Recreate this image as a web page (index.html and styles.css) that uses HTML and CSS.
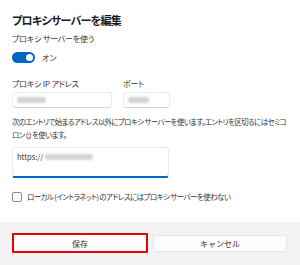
FILE: index.html
```html
<!DOCTYPE html>
<html lang="ja">
<head>
    <meta charset="UTF-8">
    <meta name="viewport" content="width=device-width, initial-scale=1.0">
    <title>プロキシサーバーを編集</title>
    <link rel="stylesheet" href="styles.css">
</head>
<body>
    <div class="dialog">
        <div class="content">
            <h1>プロキシサーバーを編集</h1>
            <div class="label">プロキシ サーバーを使う</div>
            <div class="toggle-row">
                <span class="toggle"><span class="knob"></span></span>
                <span class="toggle-text">オン</span>
            </div>

            <div class="fields">
                <div class="field ip">
                    <div class="label">プロキシ IP アドレス</div>
                    <div class="input"><span class="blur" style="width: 29px"></span></div>
                </div>
                <div class="field port">
                    <div class="label">ポート</div>
                    <div class="input"><span class="blur" style="width: 21px"></span></div>
                </div>
            </div>

            <p class="desc">次のエントリで始まるアドレス以外にプロキシ サーバーを使います。エントリを区切るにはセミコロン (;) を使います。</p>
            <div class="textarea"><span class="value">https://</span><span class="blur" style="width: 48px"></span></div>

            <label class="check-row">
                <span class="checkbox"></span>
                <span>ローカル (イントラネット) のアドレスにはプロキシ サーバーを使わない</span>
            </label>
        </div>

        <div class="footer">
            <div class="save-mark"><button class="btn">保存</button></div>
            <button class="btn cancel">キャンセル</button>
        </div>
    </div>
</body>
</html>
```

FILE: styles.css
```css
* { box-sizing: border-box; }
body { margin: 0; font-family: "Noto Sans CJK JP", "Noto Sans", sans-serif; font-feature-settings: "palt"; color: #333; background: #fff; }
.dialog { width: 300px; height: 265px; display: flex; flex-direction: column; overflow: hidden; }
.content { padding: 12px 12px 0 12px; }
h1 { margin: 0; font-size: 11px; line-height: 16px; font-weight: 700; letter-spacing: -0.7px; color: #1b1b1b; }
.label { font-size: 8px; line-height: 12px; letter-spacing: -0.2px; }
h1 + .label { margin-top: 5px; }
.toggle-row { display: flex; align-items: center; gap: 7px; margin-top: 7px; height: 11px; }
.toggle { width: 23px; height: 11px; border-radius: 6px; background: #0067c0; display: flex; align-items: center; justify-content: flex-end; padding-right: 2px; }
.knob { width: 7px; height: 7px; border-radius: 50%; background: #fff; }
.toggle-text { font-size: 8px; line-height: 11px; }
.fields { display: flex; gap: 11px; margin-top: 15px; }
.field .label { height: 12px; }
.ip .input { width: 100px; }
.port .input { width: 47px; }
.input { margin-top: 2px; height: 16px; border: 1px solid #ececec; border-bottom-color: #d6d6d6; border-radius: 3px; display: flex; align-items: center; padding-left: 4px; }
.blur { display: inline-block; height: 6px; background: #d4d4d4; border-radius: 2px; filter: blur(1px); }
.desc { margin: 7px 0 0; font-size: 7.45px; line-height: 13px; letter-spacing: -0.6px; }
.textarea { margin-top: 6px; width: 157px; height: 31px; border: 1px solid #ececec; border-bottom: 2px solid #0067c0; border-radius: 3px; padding: 3px 4px; display: flex; align-items: flex-start; gap: 2px; }
.textarea .value { font-size: 7.5px; line-height: 12px; }
.textarea .blur { margin-top: 3px; }
.check-row { display: flex; align-items: center; gap: 5px; margin-top: 14px; font-size: 7.5px; line-height: 10px; letter-spacing: -0.6px; }
.checkbox { width: 10px; height: 10px; border: 1px solid #8a8a8a; border-radius: 2px; background: #fff; flex-shrink: 0; }
.footer { flex-shrink: 0; margin-top: auto; height: 43px; background: #f3f3f3; padding: 11px 13px 0 12px; display: grid; grid-template-columns: 136px 134px; gap: 5px; align-items: start; }
.btn { display: block; width: 100%; height: 17px; font-family: inherit; font-size: 8px; color: #333; background: #fdfdfd; border: 1px solid #e5e5e5; border-radius: 3px; padding: 0; }
.save-mark { display: flex; height: 20px; border: 2px solid #e8000b; }
.save-mark .btn { height: 16px; border-color: #fdfdfd; }
.cancel { margin-top: 2px; }
```
